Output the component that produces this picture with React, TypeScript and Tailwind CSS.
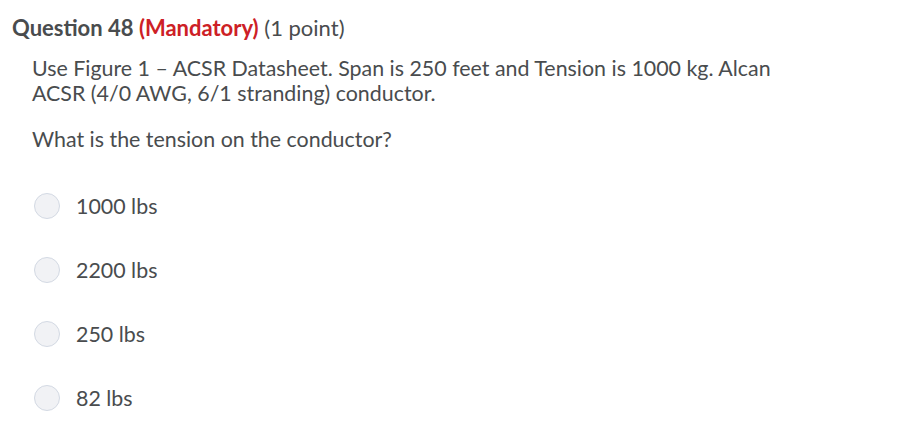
export default function App() {
  const options = ["1000 lbs", "2200 lbs", "250 lbs", "82 lbs"];
  return (
    <div className="w-[919px] h-[439px] bg-white text-[#494c4e] font-['Lato',sans-serif] overflow-hidden">
      <div className="pl-[12px] pt-[14px]">
        <h2 className="text-[22px] leading-[28px]">
          <span className="font-bold">Question 48 </span>
          <span className="font-bold text-[#cd2026]">(Mandatory)</span>
          <span> (1 point)</span>
        </h2>
      </div>
      <div className="pl-[32px] pt-[14px] text-[21.4px] leading-[25px]">
        <p>
          Use Figure 1 – ACSR Datasheet. Span is 250 feet and Tension is 1000 kg. Alcan
          <br />
          ACSR (4/0 AWG, 6/1 stranding) conductor.
        </p>
        <p className="mt-[21px]">What is the tension on the conductor?</p>
      </div>
      <div className="pl-[34px] pt-[41px] flex flex-col gap-[38px]">
        {options.map((o) => (
          <label key={o} className="flex items-center gap-[16px] text-[21.4px] leading-[26px]">
            <span className="w-[26px] h-[26px] rounded-full bg-[#f1f2f5] border border-[#d3d9e3] shrink-0" />
            <span>{o}</span>
          </label>
        ))}
      </div>
    </div>
  );
}
